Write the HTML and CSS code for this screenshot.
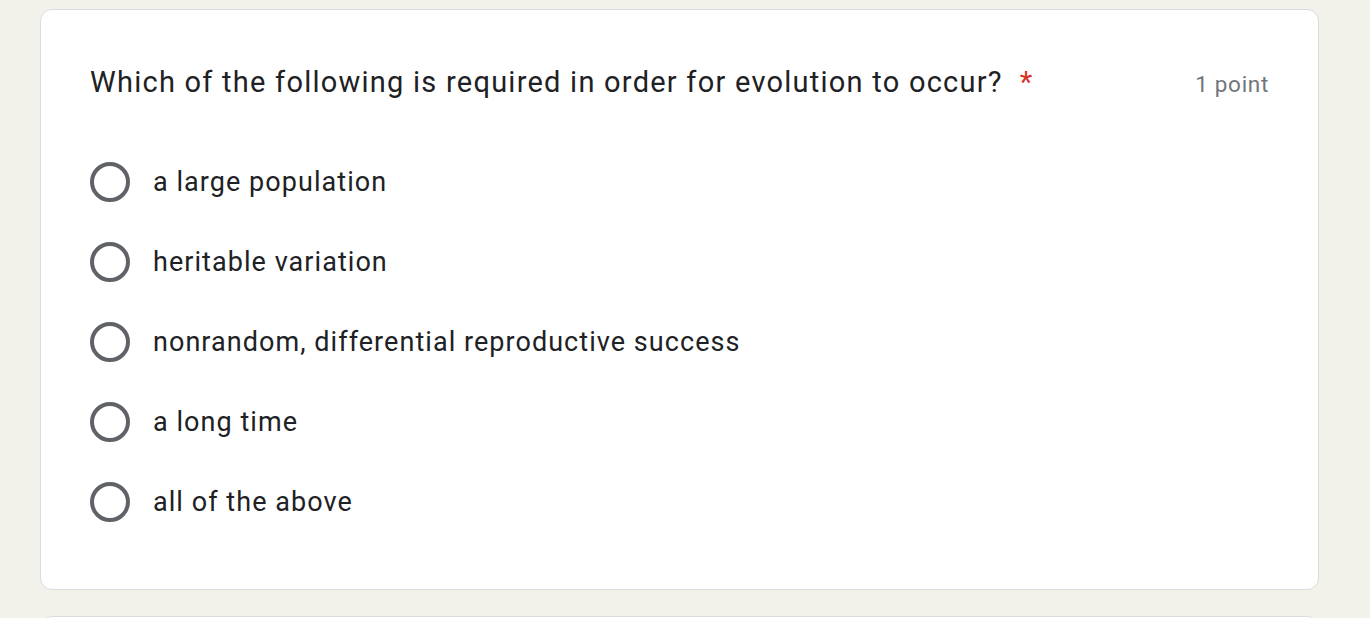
FILE: index.html
```html
<!DOCTYPE html>
<html lang="en">
<head>
<meta charset="utf-8">
<link rel="stylesheet" href="styles.css">
<title>Question</title>
</head>
<body>
<main class="page">
  <section class="card">
    <div class="q-head">
      <div class="q-title">Which of the following is required in order for evolution to occur?<span class="req">*</span></div>
      <div class="q-points">1 point</div>
    </div>
    <div class="options">
      <label class="opt"><span class="radio"></span><span class="opt-text">a large population</span></label>
      <label class="opt"><span class="radio"></span><span class="opt-text">heritable variation</span></label>
      <label class="opt"><span class="radio"></span><span class="opt-text">nonrandom, differential reproductive success</span></label>
      <label class="opt"><span class="radio"></span><span class="opt-text">a long time</span></label>
      <label class="opt"><span class="radio"></span><span class="opt-text">all of the above</span></label>
    </div>
  </section>
  <section class="card next"></section>
</main>
</body>
</html>
```

FILE: styles.css
```css
html, body {
  margin: 0;
  padding: 0;
  background: #f2f2ea;
  font-family: Roboto, "Liberation Sans", Arial, sans-serif;
  color: #202124;
  overflow: hidden;
}
.page {
  padding: 9px 0 0 40px;
  display: flex;
  flex-direction: column;
  gap: 26px;
}
.card {
  width: 1279px;
  box-sizing: border-box;
  background: #fff;
  border: 1px solid #dadce0;
  border-radius: 12px;
  padding: 54px 49px 47px 49px;
}
.card.next {
  height: 60px;
  padding: 0;
}
.q-head {
  display: flex;
  justify-content: space-between;
  align-items: center;
  height: 36px;
}
.q-title {
  font-size: 29px;
  line-height: 36px;
  letter-spacing: 1.24px;
  white-space: nowrap;
}
.req {
  color: #d93025;
  margin-left: 17px;
}
.q-points {
  font-size: 22.5px;
  letter-spacing: 0.7px;
  color: #70757a;
  padding-top: 4px;
}
.options {
  margin-top: 42px;
  display: flex;
  flex-direction: column;
}
.opt {
  height: 80px;
  display: flex;
  align-items: center;
}
.radio {
  width: 40px;
  height: 40px;
  box-sizing: border-box;
  border: 4px solid #5f6368;
  border-radius: 50%;
  flex: none;
}
.opt-text {
  margin-left: 23px;
  font-size: 27px;
  line-height: 32px;
  letter-spacing: 1.05px;
}
```
